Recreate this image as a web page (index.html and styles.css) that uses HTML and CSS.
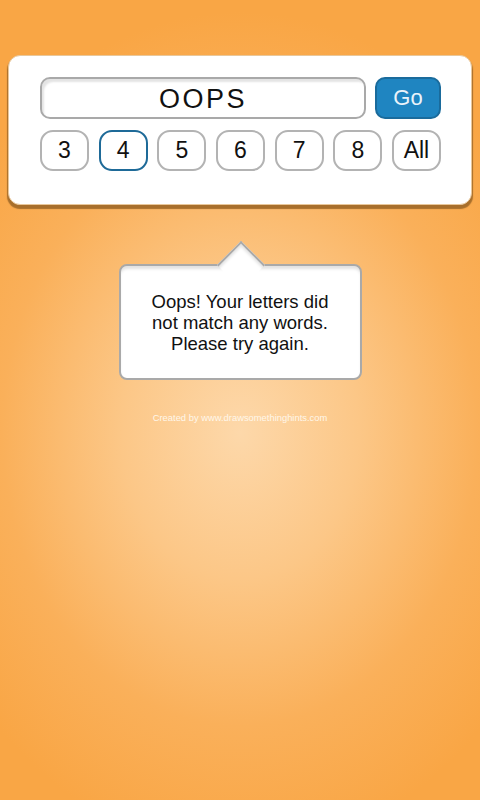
FILE: index.html
```html
<!DOCTYPE html>
<html>
<head>
<meta charset="utf-8">
<link rel="stylesheet" href="styles.css">
</head>
<body>
<div class="page">
  <div class="card">
    <div class="search-row">
      <div class="word-input">OOPS</div>
      <div class="go-btn">Go</div>
    </div>
    <div class="len-row">
      <div class="len-btn">3</div>
      <div class="len-btn selected">4</div>
      <div class="len-btn">5</div>
      <div class="len-btn">6</div>
      <div class="len-btn">7</div>
      <div class="len-btn">8</div>
      <div class="len-btn">All</div>
    </div>
  </div>
  <div class="bubble">
    <p>Oops! Your letters did<br>not match any words.<br>Please try again.</p>
  </div>
  <div class="credit">Created by www.drawsomethinghints.com</div>
</div>
</body>
</html>
```
FILE: styles.css
```css
html, body {
  margin: 0;
  padding: 0;
  height: 100%;
}
body {
  font-family: "Liberation Sans", Arial, sans-serif;
  background: radial-gradient(ellipse 340px 420px at 50% 54%, #fdd8aa 0%, #fcc787 35%, #fab05a 70%, #f9a645 100%);
  background-color: #f9a645;
}
.page {
  display: flex;
  flex-direction: column;
  align-items: center;
  padding-top: 55px;
}
.card {
  box-sizing: border-box;
  width: 464px;
  height: 150px;
  background: #fff;
  border: 1px solid #e9c79a;
  border-radius: 12px;
  box-shadow: 0 3px 1px 1px #a86f2c;
  padding: 21px 30px 0 31px;
  display: flex;
  flex-direction: column;
  gap: 11px;
}
.search-row {
  display: flex;
  gap: 9px;
  height: 42px;
}
.word-input {
  box-sizing: border-box;
  flex: 1;
  border: 2px solid #a9a9a9;
  border-radius: 10px;
  background: #fff;
  box-shadow: inset 3px 4px 2px -1px #e4e4e4;
  font-size: 27px;
  letter-spacing: 2.5px;
  color: #111;
  display: flex;
  align-items: center;
  justify-content: center;
  padding-top: 2px;
}
.go-btn {
  box-sizing: border-box;
  width: 66px;
  border: 2px solid #1a6b9c;
  border-radius: 10px;
  background: #1f85c1;
  color: #eaf3fa;
  font-size: 22px;
  display: flex;
  align-items: center;
  justify-content: center;
}
.len-row {
  display: flex;
  justify-content: space-between;
  height: 41px;
}
.len-btn {
  box-sizing: border-box;
  width: 49px;
  border: 2px solid #b3b3b3;
  border-radius: 13px;
  background: #fff;
  font-size: 23px;
  color: #111;
  display: flex;
  align-items: center;
  justify-content: center;
}
.len-btn.selected {
  border-color: #1e6a98;
}
.bubble {
  position: relative;
  box-sizing: border-box;
  width: 243px;
  height: 116px;
  margin-top: 59px;
  background: #fff;
  border: 2px solid #a9a9a9;
  border-radius: 8px;
  box-shadow: inset 0 4px 3px -1px #e2e2e2;
  display: flex;
  align-items: center;
  justify-content: center;
}
.bubble::before {
  content: "";
  position: absolute;
  width: 32px;
  height: 32px;
  left: 103px;
  top: -18px;
  background: #fff;
  border-top: 2px solid #a9a9a9;
  border-left: 2px solid #a9a9a9;
  box-shadow: inset 3px 3px 3px -1px #e2e2e2;
  transform: rotate(45deg);
}
.bubble p {
  position: relative;
  margin: 0;
  font-size: 18.5px;
  line-height: 21px;
  color: #111;
  text-align: center;
}
.credit {
  margin-top: 32px;
  font-size: 9.4px;
  color: #fff7ea;
}
```
